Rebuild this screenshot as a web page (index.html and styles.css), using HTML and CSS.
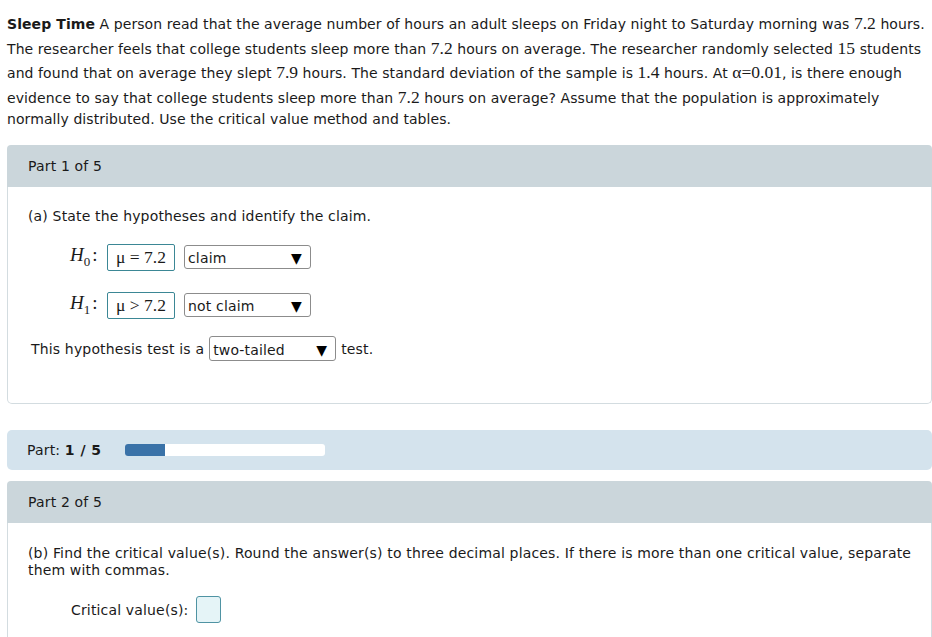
FILE: index.html
```html
<!DOCTYPE html>
<html>
<head>
<meta charset="utf-8">
<link rel="stylesheet" href="styles.css">
</head>
<body>
<div class="page">
  <p class="intro">
    <b>Sleep Time</b> A person read that the average number of hours an adult sleeps on Friday night to Saturday morning was <span class="m">7.2</span> hours.<br>
    The researcher feels that college students sleep more than <span class="m">7.2</span> hours on average. The researcher randomly selected <span class="m">15</span> students<br>
    and found that on average they slept <span class="m">7.9</span> hours. The standard deviation of the sample is <span class="m">1.4</span> hours. At <span class="m">α=0.01</span>, is there enough<br>
    evidence to say that college students sleep more than <span class="m">7.2</span> hours on average? Assume that the population is approximately<br>
    normally distributed. Use the critical value method and tables.
  </p>

  <section class="panel">
    <div class="panel-head">Part 1 of 5</div>
    <div class="panel-body part1">
      <p class="q">(a) State the hypotheses and identify the claim.</p>
      <div class="hyp">
        <span class="hlabel"><i>H</i><sub>0</sub>:</span>
        <span class="ans">μ = 7.2</span>
        <span class="sel">claim<span class="tri">▼</span></span>
      </div>
      <div class="hyp">
        <span class="hlabel"><i>H</i><sub>1</sub>:</span>
        <span class="ans">μ &gt; 7.2</span>
        <span class="sel">not claim<span class="tri">▼</span></span>
      </div>
      <div class="testrow">
        This hypothesis test is a <span class="sel wide">two-tailed<span class="tri">▼</span></span> test.
      </div>
    </div>
  </section>

  <div class="progress">
    <span class="plabel">Part: <b>1 / 5</b></span>
    <span class="track"><span class="fill" style="width:20%"></span></span>
  </div>

  <section class="panel">
    <div class="panel-head">Part 2 of 5</div>
    <div class="panel-body part2">
      <p class="q2">(b) Find the critical value(s). Round the answer(s) to three decimal places. If there is more than one critical value, separate them with commas.</p>
      <div class="crit">Critical value(s): <span class="blank"></span></div>
    </div>
  </section>
</div>
</body>
</html>
```

FILE: styles.css
```css
html, body {
  margin: 0;
  padding: 0;
  background: #ffffff;
}
body {
  font-family: "DejaVu Sans", Verdana, sans-serif;
  font-size: 14px;
  letter-spacing: 0.16px;
  color: #1a1a1a;
  overflow: hidden;
}
.page {
  padding-left: 7px;
  width: 925px;
}
.intro {
  margin: 11px 0 0 0;
  line-height: 20px;
  letter-spacing: 0.08px;
  white-space: nowrap;
}
.intro b {
  font-weight: bold;
}
.m {
  font-family: "Liberation Serif", "Times New Roman", serif;
  font-size: 17.5px;
  letter-spacing: 0;
  line-height: 24.5px;
}
.panel {
  margin-top: 16px;
}
.panel-head {
  background: #cbd6db;
  height: 42px;
  line-height: 42px;
  padding-left: 21px;
  border-radius: 4px 4px 0 0;
}
.panel-body {
  border: 1px solid #d3dce0;
  border-top: none;
  border-radius: 0 0 5px 5px;
  padding-left: 20px;
}
.part1 {
  height: 217px;
  box-sizing: border-box;
  padding-top: 19px;
}
.q {
  margin: 0;
  line-height: 20px;
}
.hyp {
  display: flex;
  align-items: center;
  margin-top: 17px;
  padding-left: 42px;
  height: 28px;
}
.hyp + .hyp {
  margin-top: 20px;
}
.hlabel {
  font-family: "Liberation Serif", "Times New Roman", serif;
  font-size: 19px;
  letter-spacing: 0;
  width: 37px;
}
.hlabel sub {
  font-size: 13px;
  vertical-align: -5px;
  font-style: normal;
  margin-right: 2px;
}
.ans {
  display: inline-flex;
  align-items: center;
  justify-content: center;
  box-sizing: border-box;
  width: 68px;
  height: 27px;
  border: 1px solid #3b8795;
  border-radius: 2px;
  font-family: "Liberation Serif", "Times New Roman", serif;
  font-size: 17.5px;
  letter-spacing: 0;
  margin-right: 9px;
}
.sel {
  display: inline-flex;
  align-items: center;
  justify-content: space-between;
  box-sizing: border-box;
  width: 127px;
  height: 24px;
  border: 1px solid #8c8c8c;
  border-radius: 3px;
  padding: 1px 8px 0 3px;
  font-size: 14px;
  background: #ffffff;
}
.tri {
  font-size: 14px;
  color: #000;
}
.testrow {
  margin-top: 17px;
  padding-left: 3px;
  display: flex;
  align-items: center;
  gap: 5px;
}
.testrow .sel {
  height: 25px;
  padding-top: 3px;
}
.progress {
  margin-top: 26px;
  height: 40px;
  background: #d4e3ed;
  border-radius: 5px;
  display: flex;
  align-items: center;
  padding-left: 20px;
}
.plabel {
  width: 98px;
}
.plabel b {
  letter-spacing: 0.5px;
}
.track {
  display: block;
  width: 200px;
  height: 12px;
  background: #ffffff;
  border-radius: 3px;
  overflow: hidden;
}
.fill {
  display: block;
  height: 100%;
  background: #3a72a8;
}
.progress + .panel {
  margin-top: 11px;
}
.part2 {
  padding-top: 22px;
  height: 140px;
}
.q2 {
  margin: 0;
  line-height: 17px;
  width: 898px;
  white-space: normal;
}
.crit {
  margin-top: 17px;
  padding-left: 43px;
  display: flex;
  align-items: center;
  gap: 8px;
}
.blank {
  display: inline-block;
  box-sizing: border-box;
  width: 25px;
  height: 27px;
  background: #e5f4f7;
  border: 1px solid #4f93a3;
  border-radius: 3px;
}
```
